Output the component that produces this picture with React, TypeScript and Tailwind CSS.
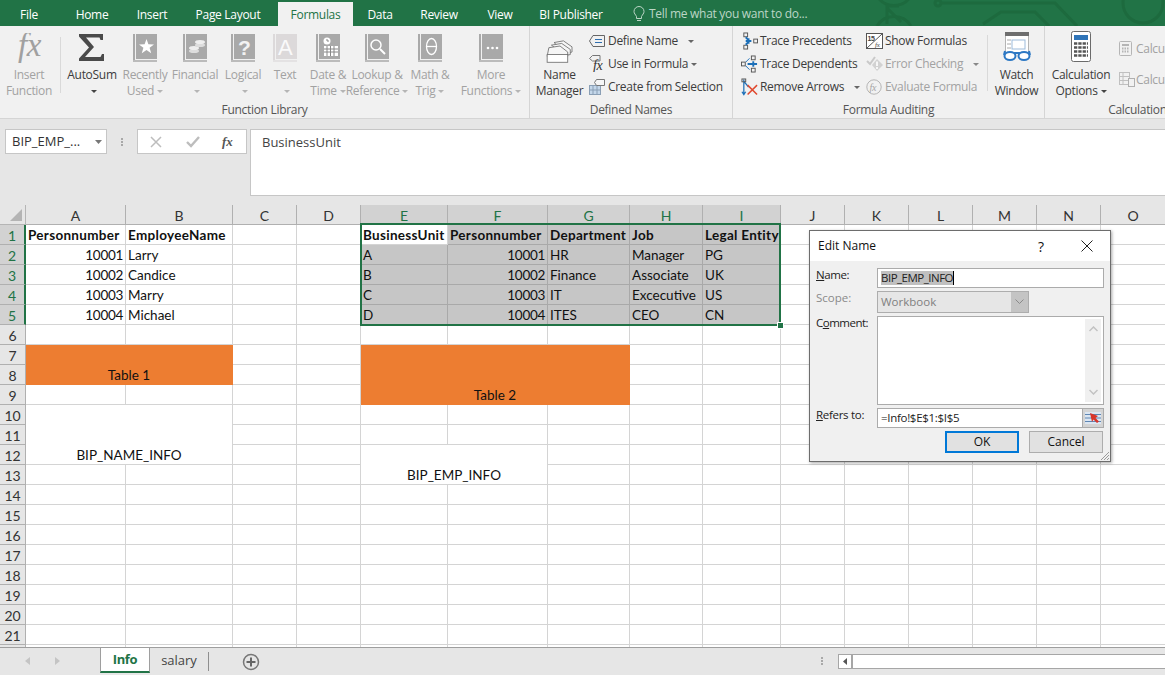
import React from "react";

const UI = "[font-family:'Open_Sans',sans-serif]";

function Book({ children, light }: { children?: React.ReactNode; light?: boolean }) {
  const f = light ? "#dcd9da" : "#a9a9a9";
  return (
    <svg width="25" height="29" viewBox="0 0 25 29">
      <rect x="0" y="0" width="24" height="28" fill={f} />
      <rect x="2" y="0" width="1" height="25" fill="#f1f1f1" />
      <rect x="2" y="25" width="22" height="1" fill="#f1f1f1" />
      <rect x="0" y="26" width="24" height="2" fill={light ? "#e4e2e3" : "#bbbbbb"} />
      {children}
    </svg>
  );
}

function Arrow({ c = "#a6a6a6" }: { c?: string }) {
  return (
    <svg width="6" height="3" viewBox="0 0 6 3" className="inline-block ml-[3px] align-middle">
      <path d="M0 0H6L3 3Z" fill={c} />
    </svg>
  );
}

function Big({ w, icon, a, b, arrow, off }: { w: string; icon: React.ReactNode; a: string; b?: string; arrow?: boolean; off?: boolean }) {
  return (
    <div className={`${w} shrink-0 flex flex-col items-center ${off ? "text-[#a2a2a2]" : "text-[#3c3c3c]"}`}>
      <div className="h-[33px] flex items-start justify-center">{icon}</div>
      <div className="h-[16px] leading-[16px] whitespace-nowrap">{a}</div>
      <div className="h-[16px] leading-[16px] whitespace-nowrap flex items-center">
        {b}
        {arrow && <Arrow c={off ? "#b5b5b5" : "#444"} />}
      </div>
    </div>
  );
}

function Small({ icon, label, off, arrow, gap, w }: { icon: React.ReactNode; label: string; off?: boolean; arrow?: boolean; gap?: string; w: string }) {
  return (
    <div className={`h-[23px] flex items-center whitespace-nowrap ${w} ${off ? "text-[#a2a2a2]" : "text-[#3c3c3c]"}`}>
      <span className="w-[19px] h-[18px] flex items-center justify-start shrink-0">{icon}</span>
      <span>{label}</span>
      {arrow && <span className={gap}><Arrow c={off ? "#888" : "#666"} /></span>}
    </div>
  );
}

function Group({ w, label, children }: { w: string; label: string; children: React.ReactNode }) {
  return (
    <div className={`${w} shrink-0 h-full flex flex-col border-r border-[#d5d5d5]`}>
      <div className="flex-1 flex pt-[8px]">{children}</div>
      <div className="h-[16px] leading-[16px] text-center text-[#555] whitespace-nowrap">{label}</div>
    </div>
  );
}

const Sep = ({ cls }: { cls: string }) => <div className={`w-px bg-[#d9d9d9] h-[56px] shrink-0 ${cls}`} />;

const tabs: [string, string][] = [
  ["File", "w-[58px]"], ["Home", "w-[68px]"], ["Insert", "w-[52px]"], ["Page Layout", "w-[100px]"],
  ["Formulas", "w-[75px]"], ["Data", "w-[54px]"], ["Review", "w-[64px]"], ["View", "w-[58px]"], ["BI Publisher", "w-[84px]"],
];

const cols = ["", "A", "B", "C", "D", "E", "F", "G", "H", "I", "J", "K", "L", "M", "N", "O"];

type C = { t: string; b?: boolean; r?: boolean };
const data: Record<string, C> = {
  "1-1": { t: "Personnumber", b: true }, "1-2": { t: "EmployeeName", b: true },
  "2-1": { t: "10001", r: true }, "2-2": { t: "Larry" },
  "3-1": { t: "10002", r: true }, "3-2": { t: "Candice" },
  "4-1": { t: "10003", r: true }, "4-2": { t: "Marry" },
  "5-1": { t: "10004", r: true }, "5-2": { t: "Michael" },
  "1-5": { t: "BusinessUnit", b: true }, "1-6": { t: "Personnumber", b: true }, "1-7": { t: "Department", b: true }, "1-8": { t: "Job", b: true }, "1-9": { t: "Legal Entity", b: true },
  "2-5": { t: "A" }, "2-6": { t: "10001", r: true }, "2-7": { t: "HR" }, "2-8": { t: "Manager" }, "2-9": { t: "PG" },
  "3-5": { t: "B" }, "3-6": { t: "10002", r: true }, "3-7": { t: "Finance" }, "3-8": { t: "Associate" }, "3-9": { t: "UK" },
  "4-5": { t: "C" }, "4-6": { t: "10003", r: true }, "4-7": { t: "IT" }, "4-8": { t: "Excecutive" }, "4-9": { t: "US" },
  "5-5": { t: "D" }, "5-6": { t: "10004", r: true }, "5-7": { t: "ITES" }, "5-8": { t: "CEO" }, "5-9": { t: "CN" },
};

const merged: Record<string, { cls: string; t: string; covered: string[] }> = {
  "7-1": { cls: "col-span-2 row-span-2 bg-[#ed7d31] border-[#ed7d31]", t: "Table 1", covered: ["7-2", "8-1", "8-2"] },
  "7-5": { cls: "col-span-3 row-span-3 bg-[#ed7d31] border-[#ed7d31]", t: "Table 2", covered: ["7-6", "7-7", "8-5", "8-6", "8-7", "9-5", "9-6", "9-7"] },
  "10-1": { cls: "col-span-2 row-span-3 bg-white", t: "BIP_NAME_INFO", covered: ["10-2", "11-1", "11-2", "12-1", "12-2"] },
  "12-5": { cls: "col-span-2 row-span-2 bg-white", t: "BIP_EMP_INFO", covered: ["12-6", "13-5", "13-6"] },
};
const covered = new Set(Object.values(merged).flatMap((m) => m.covered));

function Grid() {
  const cells: React.ReactNode[] = [];
  cols.forEach((c, i) => {
    const sel = i >= 5 && i <= 9;
    cells.push(
      i === 0 ? (
        <div key="corner" className="bg-[#e6e6e6] border-r border-b border-[#b5b5b5] flex items-end justify-end p-[3px]">
          <svg width="12" height="12" viewBox="0 0 12 12"><path d="M12 0V12H0Z" fill="#b4b4b4" /></svg>
        </div>
      ) : (
        <div key={c} className={`border-r border-b border-[#b0b0b0] flex items-center justify-center text-[14px] pt-[1px] ${sel ? "bg-[#d2d2d2] text-[#217346]" : "bg-[#e6e6e6] text-[#333]"}`}>{c}</div>
      )
    );
  });
  for (let r = 1; r <= 22; r++) {
    for (let i = 0; i < 16; i++) {
      const k = `${r}-${i}`;
      if (i === 0) {
        const sel = r <= 5;
        cells.push(
          <div key={k} className={`border-b border-[#b0b0b0] flex items-center justify-center text-[14px] pt-[1px] ${sel ? "bg-[#d2d2d2] text-[#217346] border-r-2 border-r-[#217346]" : "bg-[#e6e6e6] text-[#333] border-r border-r-[#b0b0b0]"}`}>{r <= 21 ? r : ""}</div>
        );
        continue;
      }
      if (covered.has(k)) continue;
      const m = merged[k];
      if (m) {
        cells.push(
          <div key={k} className={`border-r border-b border-[#d4d4d4] flex items-end justify-center leading-[18px] text-[#111] ${m.cls}`}>{m.t}</div>
        );
        continue;
      }
      const d = data[k];
      const sel = r <= 5 && i >= 5 && i <= 9 && k !== "1-5";
      cells.push(
        <div key={k} className={`border-r border-b flex items-end px-[2px] leading-[18px] overflow-visible whitespace-nowrap text-[#111] ${sel ? "bg-[#c6c6c6] border-[#a9a9a9]" : "bg-white border-[#d4d4d4]"} ${d?.r ? "justify-end tracking-[-0.3px]" : ""} ${d?.b ? "font-bold tracking-[0.3px]" : ""}`}>{d?.t}</div>
      );
    }
  }
  return (
    <div className="relative h-[442px] overflow-hidden [font-family:'Lato',sans-serif] text-[13.5px]">
      <div className="grid grid-cols-[26px_100px_107px_64px_64px_87px_100px_82px_73px_78px_64px_64px_64px_64px_64px_65px] auto-rows-[20px]">
        {cells}
      </div>
      {/* selection outline */}
      <div className="absolute left-[360px] top-[18px] w-[421px] h-[103px] border-2 border-[#217346] pointer-events-none" />
      <div className="absolute left-[778px] top-[118px] w-[5px] h-[5px] bg-[#217346] outline outline-1 outline-white" />
    </div>
  );
}

function Dialog() {
  return (
    <div className={`absolute left-[809px] top-[230px] w-[302px] h-[232px] bg-[#f0f0f0] border border-[#6d6d6d] shadow-[1px_1px_3px_rgba(0,0,0,0.35)] ${UI} text-[11.5px] text-[#222]`}>
      <div className="h-[30px] bg-white flex items-center pl-[8px] text-[12px] text-[#111]">
        <span className="flex-1">Edit Name</span>
        <span className="w-[16px] text-center text-[14px] mr-[32px]">?</span>
        <svg width="12" height="12" viewBox="0 0 12 12" className="mr-[17px]"><path d="M0.5 0.5L11.5 11.5M11.5 0.5L0.5 11.5" stroke="#222" strokeWidth="1" /></svg>
      </div>
      <div className="pl-[6px] pt-[7px] pr-[6px] flex flex-col gap-[3px]">
        <div className="flex h-[20px]">
          <div className="w-[61px] leading-[13px] tracking-[-0.4px]"><u>N</u>ame:</div>
          <div className="flex-1 border border-[#ababab] bg-white h-[20px] pl-[3px] flex items-center">
            <span className="bg-[#c0c0c0] leading-[14px] text-[#222] tracking-[-0.5px]">BIP_EMP_INFO</span>
            <span className="w-px h-[14px] bg-black" />
          </div>
        </div>
        <div className="flex h-[22px]">
          <div className="w-[61px] leading-[13px] text-[#8a8a8a]">Scope:</div>
          <div className="w-[152px] border border-[#adadad] bg-[#e6e6e6] flex items-center pl-[3px] text-[#808080]">
            <span className="flex-1">Workbook</span>
            <span className="w-[17px] h-full bg-[#c4c4c4] flex items-center justify-center">
              <svg width="9" height="6" viewBox="0 0 9 6"><path d="M0.5 0.5L4.5 4.5L8.5 0.5" stroke="#8a8a8a" fill="none" /></svg>
            </span>
          </div>
        </div>
        <div className="flex h-[89px]">
          <div className="w-[61px] leading-[13px] tracking-[-0.5px]">C<u>o</u>mment:</div>
          <div className="flex-1 border border-[#ababab] bg-white flex justify-end p-[2px]">
            <div className="w-[16px] bg-[#f0f0f0] flex flex-col justify-between items-center py-[7px]">
              <svg width="9" height="6" viewBox="0 0 9 6"><path d="M0.5 5L4.5 1L8.5 5" stroke="#c2c2c2" strokeWidth="1.5" fill="none" /></svg>
              <svg width="9" height="6" viewBox="0 0 9 6"><path d="M0.5 1L4.5 5L8.5 1" stroke="#c2c2c2" strokeWidth="1.5" fill="none" /></svg>
            </div>
          </div>
        </div>
        <div className="flex h-[20px]">
          <div className="w-[61px] leading-[13px] tracking-[-0.3px]"><u>R</u>efers to:</div>
          <div className="flex-1 border border-[#ababab] bg-white flex items-center pl-[3px]">
            <span className="flex-1 tracking-[-0.3px]">=Info!$E$1:$I$5</span>
            <span className="w-[21px] h-full bg-[#d4d4d4] flex items-center justify-center border-l border-[#ababab]">
              <svg width="16" height="12" viewBox="0 0 16 12">
                <rect width="16" height="12" fill="#dbe6f2" />
                <path d="M0 2.5H16M0 6H16M0 9.5H16" stroke="#5f86b3" strokeWidth="1" />
                <path d="M5 1L13 4L10.5 6L14 9.5L12 11L8.5 7.5L7 10Z" fill="#d8352a" />
              </svg>
            </span>
          </div>
        </div>
        <div className="flex justify-end items-start gap-[10px] pr-px text-[12px]">
          <div className="w-[74px] h-[22px] border-2 border-[#0078d7] bg-[#e1e1e1] flex items-center justify-center text-[#111]">OK</div>
          <div className="w-[74px] h-[22px] border border-[#adadad] bg-[#e1e1e1] flex items-center justify-center text-[#111]">Cancel</div>
        </div>
      </div>
      <svg width="12" height="12" viewBox="0 0 12 12" className="absolute right-0 bottom-0">
        <path d="M11 3L3 11M11 6L6 11M11 9L9 11" stroke="#9a9a9a" strokeWidth="1" />
      </svg>
    </div>
  );
}

const Fx = ({ s = 9, c = "#333" }: { s?: number; c?: string }) => (
  <text x="0" y="0" fontFamily="'Liberation Serif',serif" fontStyle="italic" fontSize={s} fill={c}>fx</text>
);

export default function App() {
  return (
    <div className="relative w-[1165px] h-[675px] overflow-hidden bg-[#e6e6e6] text-[12px]">
      {/* tab bar */}
      <div className={`relative h-[26px] bg-[#217346] ${UI} tracking-[-0.3px] flex items-end text-white`}>
        <svg width="300" height="26" viewBox="0 0 300 26" className="absolute left-[865px] top-0" fill="none" stroke="#1d6a3e" strokeWidth="3">
          <path d="M12 26A20 20 0 0 1 46 26" />
          <path d="M12 -4A20 20 0 0 0 46 -4" />
          <path d="M22 24V6H34M22 8L36 22" />
          <circle cx="73" cy="3" r="3" />
          <path d="M76 3H190L212 26" />
          <path d="M118 24L136 12H170L184 26" />
          <circle cx="278" cy="3" r="20" />
        </svg>
        {tabs.map(([t, w]) =>
          t === "Formulas" ? (
            <div key={t} className={`relative ${w} h-[24px] shrink-0 bg-[#f1f1f1] text-[#217346] text-center leading-[25px]`}>{t}</div>
          ) : (
            <div key={t} className={`relative ${w} h-[26px] shrink-0 text-center leading-[29px]`}>{t}</div>
          )
        )}
        <div className="relative flex items-center h-[26px] pl-[19px] text-[#bcd6c6] whitespace-nowrap pt-[2px]">
          <svg width="14" height="16" viewBox="0 0 14 16" fill="none" stroke="#bcd6c6" strokeWidth="1" className="mr-[3px]">
            <path d="M4.5 10.5C3.5 8.5 2 7.5 2 5.5A5 5 0 0 1 12 5.5C12 7.5 10.5 8.5 9.5 10.5V12.5H4.5ZM5 14.5H9" />
          </svg>
          Tell me what you want to do...
        </div>
      </div>

      {/* ribbon */}
      <div className={`h-[93px] bg-[#f1f1f1] border-b border-[#d5d5d5] flex tracking-[-0.3px] ${UI}`}>
        <Group w="w-[530px]" label="Function Library">
          <Big w="w-[58px]" off a="Insert" b="Function" icon={
            <svg width="40" height="32" viewBox="0 0 40 32" className="-mt-px"><text x="9" y="23" fontFamily="'Liberation Serif',serif" fontStyle="italic" fontSize="33" fill="#a0a0a0">fx</text></svg>
          } />
          <Sep cls="mt-[3px] mr-[3px] ml-[2px]" />
          <Big w="w-[56px]" a="AutoSum" arrow icon={
            <svg width="26" height="27" viewBox="0 0 26 27"><path d="M0 0H24V6H21.5L20.5 3.5H7L15 13L6 23H21.5L23 20H25V27H0V24.5L10 13.5L0 2.5Z" fill="#4a4a4a" /></svg>
          } />
          <Big w="w-[50px]" off a="Recently" b="Used" arrow icon={
            <Book><path d="M13.5 5L15.4 10.2L21 10.4L16.6 13.8L18.2 19.2L13.5 16L8.8 19.2L10.4 13.8L6 10.4L11.6 10.2Z" fill="#fff" /></Book>
          } />
          <Big w="w-[50px]" off a="Financial" arrow icon={
            <Book><ellipse cx="11" cy="17" rx="5" ry="2" fill="#ddd" /><ellipse cx="11" cy="14" rx="5" ry="2" fill="#eee" /><ellipse cx="17" cy="11" rx="5" ry="2" fill="#ddd" /><ellipse cx="17" cy="8" rx="5" ry="2" fill="#eee" /></Book>
          } />
          <Big w="w-[46px]" off a="Logical" arrow icon={
            <Book><text x="7" y="21" fontFamily="'Liberation Sans',sans-serif" fontWeight="700" fontSize="21" fill="#f2f2f2">?</text></Book>
          } />
          <Big w="w-[38px]" off a="Text" arrow icon={
            <Book light><text x="5" y="21" fontFamily="'Liberation Sans',sans-serif" fontSize="22" fill="#fafafa">A</text></Book>
          } />
          <Big w="w-[48px]" off a="Date &" b="Time" arrow icon={
            <Book>
              <circle cx="11" cy="7" r="3.5" fill="#fff" /><path d="M11 5V7H13" stroke="#888" strokeWidth="1" fill="none" />
              <rect x="8" y="12" width="14" height="10" fill="#fff" />
              <path d="M8 15H22M8 18H22M11 12V22M14.5 12V22M18 12V22" stroke="#888" strokeWidth="1" />
            </Book>
          } />
          <Big w="w-[50px]" off a="Lookup &" b="Reference" arrow icon={
            <Book><circle cx="11" cy="11" r="5" fill="none" stroke="#fff" strokeWidth="1.5" /><path d="M15 15L20 20" stroke="#fff" strokeWidth="2" /></Book>
          } />
          <Big w="w-[56px]" off a="Math &" b="Trig" arrow icon={
            <Book><ellipse cx="13.5" cy="12.5" rx="5" ry="8" fill="none" stroke="#fff" strokeWidth="1.3" /><path d="M9 12.5H18" stroke="#fff" strokeWidth="1.3" /></Book>
          } />
          <Big w="w-[66px]" off a="More" b="Functions" arrow icon={
            <Book><circle cx="9" cy="14" r="1.3" fill="#fff" /><circle cx="13.5" cy="14" r="1.3" fill="#fff" /><circle cx="18" cy="14" r="1.3" fill="#fff" /></Book>
          } />
        </Group>

        <Group w="w-[203px]" label="Defined Names">
          <Big w="w-[59px]" a="Name" b="Manager" icon={
            <svg width="28" height="24" viewBox="0 0 32 28" fill="#f6f6f6" stroke="#6f6f6f" strokeWidth="1" className="mt-[6px]">
              <path d="M9 3L20 1L30 8V14L24 16Z" />
              <path d="M6 6L18 4L28 11V17L22 18Z" />
              <path d="M3 9L16 7L25 14V19H1Z" />
              <rect x="1" y="17" width="24" height="9" fill="#fff" />
            </svg>
          } />
          <div className="-mt-[5px] flex flex-col">
            <Small w="w-[140px]" label="Define Name" arrow gap="ml-[7px]" icon={
              <svg width="16" height="12" viewBox="0 0 16 12" fill="none" stroke="#666"><path d="M4 0.5H15.5V11.5H4L0.5 6Z" /><path d="M6 4.5H13M6 7.5H13" stroke="#2f6fb0" /></svg>
            } />
            <Small w="w-[140px]" label="Use in Formula" arrow icon={
              <svg width="17" height="17" viewBox="0 0 17 17"><path d="M3.5 0.5H11V6H3.5L0.5 3.5Z" fill="none" stroke="#777" /><g transform="translate(4 15)"><Fx s={14} c="#333" /></g></svg>
            } />
            <Small w="w-[140px]" label="Create from Selection" icon={
              <svg width="16" height="16" viewBox="0 0 16 16"><rect x="0.5" y="6.5" width="11" height="9" fill="#c4d7ea" stroke="#8a9fb5" /><path d="M4 6.5V15.5M8 6.5V15.5M0.5 11H11.5" stroke="#8a9fb5" /><path d="M7.5 0.5H15.5V6.5H7.5L5.5 3.5Z" fill="#f6f6f6" stroke="#777" /></svg>
            } />
          </div>
        </Group>

        <Group w="w-[312px]" label="Formula Auditing">
          <div className="pl-[8px] -mt-[5px] flex flex-col">
            <Small w="w-[125px]" label="Trace Precedents" icon={
              <svg width="17" height="18" viewBox="0 0 18 18" fill="none"><rect x="3" y="0.5" width="4" height="4" stroke="#555" /><rect x="3" y="13.5" width="4" height="4" stroke="#555" /><rect x="13.5" y="7" width="4" height="4" stroke="#555" /><path d="M5 9H11M8 6V12M5 5L8 8M5 13L8 10" stroke="#1c6fb8" strokeWidth="2" /></svg>
            } />
            <Small w="w-[125px]" label="Trace Dependents" icon={
              <svg width="17" height="18" viewBox="0 0 18 18" fill="none"><rect x="0.5" y="7" width="4" height="4" stroke="#555" /><rect x="11" y="0.5" width="4" height="4" stroke="#555" /><rect x="11" y="13.5" width="4" height="4" stroke="#555" /><path d="M7 9H17M13 6V12" stroke="#1c6fb8" strokeWidth="2" /><path d="M5 7L9 3M5 11L9 15" stroke="#1c6fb8" /></svg>
            } />
            <Small w="w-[125px]" label="Remove Arrows" arrow gap="ml-[7px]" icon={
              <svg width="17" height="18" viewBox="0 0 18 18" fill="none"><path d="M3 1V16M1 14L3 17L5 14M3 3L8 9" stroke="#1c6fb8" strokeWidth="1.3" /><rect x="1" y="0.5" width="4" height="3" stroke="#555" /><path d="M7 7L17 17M17 7L7 17" stroke="#e0492f" strokeWidth="1.6" /></svg>
            } />
          </div>
          <div className="-mt-[5px] flex flex-col">
            <Small w="w-[121px]" label="Show Formulas" icon={
              <svg width="17" height="16" viewBox="0 0 17 16"><rect x="0.5" y="0.5" width="16" height="15" fill="#fff" stroke="#555" /><path d="M1 15L16 1" stroke="#555" /><text x="1.5" y="7.5" fontSize="7" fontFamily="'Liberation Sans',sans-serif" fontWeight="700" fill="#444">15</text><text x="9" y="14" fontSize="7" fontFamily="'Liberation Serif',serif" fontStyle="italic" fill="#444">fx</text></svg>
            } />
            <Small w="w-[121px]" off label="Error Checking" arrow gap="ml-[7px]" icon={
              <svg width="18" height="16" viewBox="0 0 18 16"><path d="M1 5L4 8L9 1" stroke="#c9c9c9" strokeWidth="2" fill="none" /><path d="M11 3L17 9L11 15L6 9Z" fill="#d2d2d2" /><path d="M11 5.5V10M11 11V13" stroke="#fff" strokeWidth="1.6" /></svg>
            } />
            <Small w="w-[121px]" off label="Evaluate Formula" icon={
              <svg width="16" height="16" viewBox="0 0 16 16"><circle cx="8" cy="8" r="7.2" fill="none" stroke="#b5b5b5" /><g transform="translate(3.5 11.5)"><Fx s={10} c="#a5a5a5" /></g></svg>
            } />
          </div>
          <Sep cls="mt-[1px]" />
          <Big w="w-[57px]" a="Watch" b="Window" icon={
            <svg width="30" height="32" viewBox="0 0 30 32" className="-mt-[3px]" fill="none">
              <rect x="3.5" y="1.5" width="23" height="21" fill="#fff" stroke="#b4b4b4" />
              <rect x="3" y="1" width="24" height="4" fill="#6e6e6e" />
              <rect x="10" y="9" width="13" height="9" stroke="#9dbbdb" />
              <path d="M5 9H9M5 13H9M5 17H9" stroke="#aaa" />
              <ellipse cx="8" cy="25" rx="5.5" ry="4" fill="#fff" stroke="#2d78c4" strokeWidth="2" />
              <ellipse cx="22" cy="25" rx="5.5" ry="4" fill="#fff" stroke="#2d78c4" strokeWidth="2" />
              <path d="M12 22H18M2 24L3 20M28 24L27 20" stroke="#2d78c4" strokeWidth="2" />
            </svg>
          } />
        </Group>

        <Group w="w-[186px]" label="Calculation">
          <Big w="w-[72px]" a="Calculation" b="Options" arrow icon={
            <svg width="20" height="32" viewBox="0 0 20 32" className="-mt-[3px]" fill="none">
              <rect x="0.5" y="0.5" width="19" height="30" rx="2" fill="#fff" stroke="#6b6b6b" />
              <rect x="3" y="4" width="14" height="5" fill="#2f74b8" />
              <path d="M3 12.5H17M3 16.5H17M3 20.5H17M3 24.5H17" stroke="#555" strokeWidth="2.4" strokeDasharray="3.3 1" />
            </svg>
          } />
          <div className="flex flex-col text-[#a2a2a2] pl-[2px]">
            <div className="h-[31px] flex items-center gap-[4px] whitespace-nowrap -mt-[1px]">
              <svg width="13" height="15" viewBox="0 0 13 15" fill="none"><rect x="0.5" y="0.5" width="12" height="14" rx="1" stroke="#b5b5b5" /><rect x="3" y="3" width="7" height="2" fill="#b5b5b5" /><path d="M3 7.5H10M3 10.5H10" stroke="#b5b5b5" strokeDasharray="1.5 1" strokeWidth="2" /></svg>
              Calcu
            </div>
            <div className="h-[31px] flex items-center gap-[1px] whitespace-nowrap">
              <svg width="16" height="15" viewBox="0 0 16 15" fill="none"><rect x="0.5" y="0.5" width="10" height="12" stroke="#c0c0c0" /><path d="M0.5 4.5H10M0.5 8.5H10M4 0.5V12" stroke="#c0c0c0" /><rect x="9.5" y="6.5" width="6" height="8" fill="#f1f1f1" stroke="#b0b0b0" /></svg>
              Calcu
            </div>
          </div>
        </Group>
      </div>

      {/* formula bar */}
      <div className={`h-[86px] flex items-start pt-[10px] pl-[5px] ${UI}`}>
        <div className="w-[102px] h-[25px] bg-white border border-[#c6c6c6] flex items-center pl-[6px] pr-[4px] text-[13px] text-[#333] shrink-0">
          <span className="flex-1 whitespace-nowrap">BIP_EMP_...</span>
          <svg width="7" height="4" viewBox="0 0 7 4"><path d="M0 0H7L3.5 4Z" fill="#777" /></svg>
        </div>
        <div className="w-[30px] h-[25px] flex flex-col items-center justify-center gap-[1px] shrink-0">
          <span className="w-[2px] h-[2px] bg-[#a8a8a8]" /><span className="w-[2px] h-[2px] bg-[#a8a8a8]" /><span className="w-[2px] h-[2px] bg-[#a8a8a8]" />
        </div>
        <div className="w-[110px] h-[25px] bg-white border border-[#c6c6c6] flex items-center shrink-0">
          <svg width="12" height="12" viewBox="0 0 12 12" className="ml-[12px]"><path d="M1 1L11 11M11 1L1 11" stroke="#bdbdbd" strokeWidth="1.5" /></svg>
          <svg width="14" height="12" viewBox="0 0 14 12" className="ml-[24px]"><path d="M1 6L5 10L13 1" stroke="#bdbdbd" strokeWidth="2.4" fill="none" /></svg>
          <span className="ml-[22px] [font-family:'Liberation_Serif',serif] italic font-bold text-[13px] text-[#555]">fx</span>
        </div>
        <div className="ml-[3px] flex-1 h-[67px] bg-white border border-[#c6c6c6] border-r-0 pl-[11px] pt-[3px] text-[13px] leading-[18px] text-[#444]">BusinessUnit</div>
      </div>

      <Grid />

      {/* sheet bar */}
      <div className={`h-[28px] border-t border-[#9e9e9e] flex items-start bg-[#e6e6e6] ${UI}`}>
        <div className="w-[100px] h-[26px] flex items-center shrink-0 pl-[25px] gap-[25px]">
          <svg width="5" height="8" viewBox="0 0 5 8"><path d="M5 0V8L0 4Z" fill="#c4c4c4" /></svg>
          <svg width="5" height="8" viewBox="0 0 5 8"><path d="M0 0V8L5 4Z" fill="#c4c4c4" /></svg>
        </div>
        <div className="w-[50px] h-[26px] -mt-px bg-white border-x border-t border-[#9e9e9e] border-b-2 border-b-[#217346] flex items-center justify-center font-bold text-[13px] tracking-[-0.3px] text-[#217346] shrink-0">Info</div>
        <div className="w-[58px] h-[26px] flex items-center justify-center text-[13px] text-[#444] shrink-0">salary</div>
        <div className="w-px h-[19px] mt-[4px] bg-[#8f8f8f] shrink-0" />
        <svg width="18" height="18" viewBox="0 0 18 18" className="ml-[33px] mt-[5px] shrink-0" fill="none">
          <circle cx="9" cy="9" r="7.5" stroke="#777" strokeWidth="1.5" />
          <path d="M9 4.5V13.5M4.5 9H13.5" stroke="#666" strokeWidth="2" />
        </svg>
        <div className="ml-[561px] h-[24px] flex flex-col justify-center gap-[1px] mt-[1px] shrink-0">
          <span className="w-[2px] h-[2px] bg-[#a8a8a8]" /><span className="w-[2px] h-[2px] bg-[#a8a8a8]" /><span className="w-[2px] h-[2px] bg-[#a8a8a8]" />
        </div>
        <div className="ml-[15px] mt-[6px] flex-1 h-[15px] flex border border-[#a6a6a6] border-r-0 bg-white">
          <div className="w-[14px] h-full border-r-2 border-[#a6a6a6] flex items-center justify-center">
            <svg width="4" height="7" viewBox="0 0 4 7"><path d="M4 0V7L0 3.5Z" fill="#555" /></svg>
          </div>
        </div>
      </div>

      <Dialog />
    </div>
  );
}
